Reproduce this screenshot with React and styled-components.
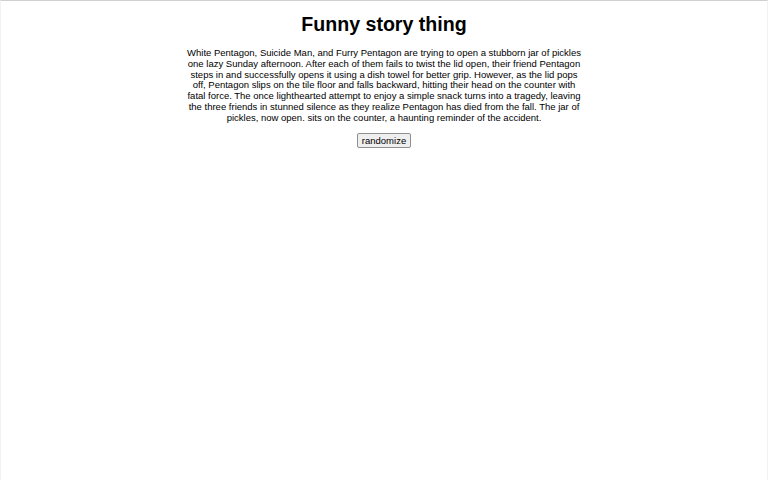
import React from 'react'
import styled, { createGlobalStyle } from 'styled-components'

const GlobalStyle = createGlobalStyle`
  html, body {
    margin: 0;
    padding: 0;
    background: #fff;
  }
  body {
    font-family: "Liberation Sans", Arial, sans-serif;
    color: #000;
  }
`

const Page = styled.div`
  box-sizing: border-box;
  min-height: 480px;
  border-top: 1px solid #d0d0d0;
  border-left: 1px solid #f2f2f2;
  border-right: 1px solid #f2f2f2;
  display: flex;
  flex-direction: column;
  align-items: center;
  text-align: center;
`

const Title = styled.h1`
  margin: 12px 0 13px;
  font-size: 19.6px;
  font-weight: bold;
  line-height: 22px;
`

const Story = styled.p`
  margin: 0 0 9px;
  width: 400px;
  font-size: 9.5px;
  line-height: 10.8px;
`

const Button = styled.button`
  font-family: "Liberation Sans", Arial, sans-serif;
  font-size: 9.5px;
  padding: 1px 4px;
  background: #efefef;
  border: 1px solid #8f8f8f;
  border-radius: 2px;
  color: #000;
  cursor: pointer;
`

const story =
  'White Pentagon, Suicide Man, and Furry Pentagon are trying to open a stubborn jar of pickles one lazy Sunday afternoon. After each of them fails to twist the lid open, their friend Pentagon steps in and successfully opens it using a dish towel for better grip. However, as the lid pops off, Pentagon slips on the tile floor and falls backward, hitting their head on the counter with fatal force. The once lighthearted attempt to enjoy a simple snack turns into a tragedy, leaving the three friends in stunned silence as they realize Pentagon has died from the fall. The jar of pickles, now open. sits on the counter, a haunting reminder of the accident.'

export default function App() {
  return (
    <>
      <GlobalStyle />
      <Page>
        <Title>Funny story thing</Title>
        <Story>{story}</Story>
        <Button type="button">randomize</Button>
      </Page>
    </>
  )
}
